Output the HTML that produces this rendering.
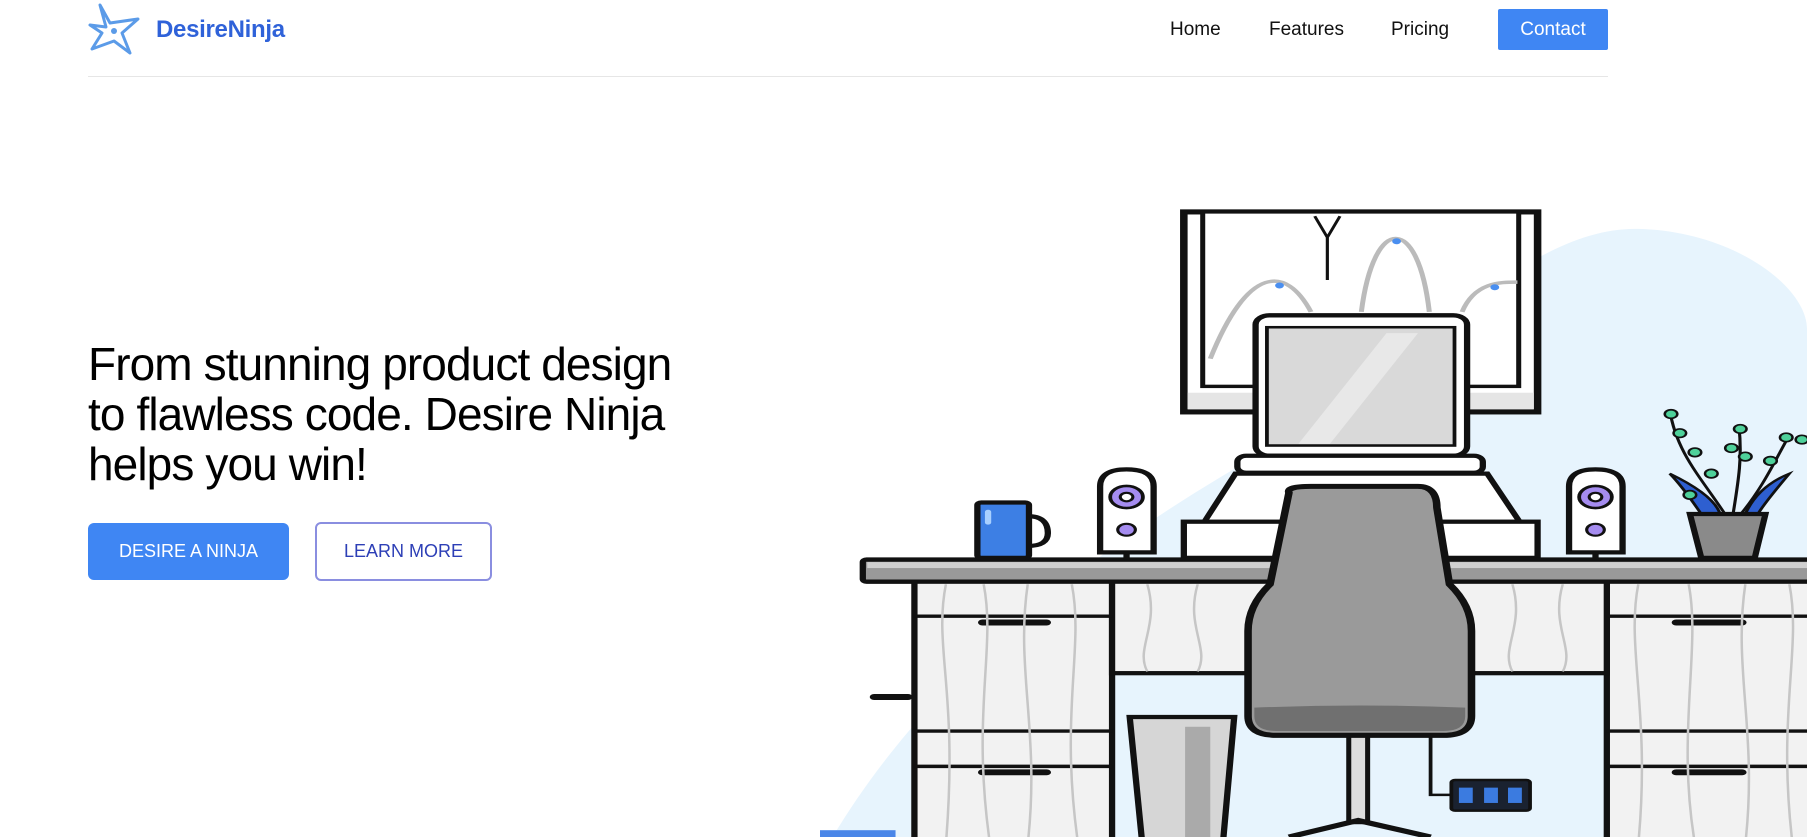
<!DOCTYPE html>
<html><head><meta charset="utf-8"><style>
*{margin:0;padding:0;box-sizing:border-box}
body{width:1807px;height:837px;overflow:hidden;background:#fff;font-family:"Liberation Sans",sans-serif;position:relative}
.logo{position:absolute;left:88px;top:3px}
.brand{position:absolute;left:156px;top:16px;font-size:24px;font-weight:bold;color:#2f62d9;letter-spacing:-0.3px}
.nav a{position:absolute;top:19px;font-size:19px;color:#111;text-decoration:none}
.contact{position:absolute;left:1498px;top:9px;width:110px;height:41px;background:#3f86f3;color:#fff;border-radius:2px;font-size:19px;text-align:center;line-height:41px}
.hr{position:absolute;left:88px;top:76px;width:1520px;height:1px;background:#e6e6e6}
h1{position:absolute;left:88px;top:339px;font-size:46px;font-weight:normal;line-height:50px;color:#000;letter-spacing:-0.9px;width:780px}
.b1{position:absolute;left:88px;top:523px;width:201px;height:57px;background:#3f86f3;color:#fff;border-radius:6px;font-size:18px;text-align:center;line-height:57px}
.b2{position:absolute;left:315px;top:522px;width:177px;height:59px;border:2px solid #8a8ee0;color:#2d3fb6;border-radius:6px;font-size:18px;text-align:center;line-height:55px}
svg.ill{position:absolute;left:820px;top:180px}
</style></head><body>
<svg class="logo" width="54" height="52" viewBox="0 0 54 52"><path d="M12 2 L22 20 L50 16 L34 30 L42 50 L26 38 L4 46 L14 30 L2 22 L18 24 Z" fill="none" stroke="#5b9be8" stroke-width="3" stroke-linejoin="round"/><circle cx="26" cy="28" r="3" fill="#5b9be8"/></svg>
<div class="brand">DesireNinja</div>
<div class="nav"><a style="left:1170px">Home</a><a style="left:1269px">Features</a><a style="left:1391px">Pricing</a></div>
<div class="contact">Contact</div>
<div class="hr"></div>
<h1>From stunning product design<br>to flawless code. Desire Ninja<br>helps you win!</h1>
<div class="b1">DESIRE A NINJA</div>
<div class="b2">LEARN MORE</div>
<svg class="ill" width="987" height="657" viewBox="0 0 1568 1544" preserveAspectRatio="none">
<path d="M20,1544 C200,1100 500,800 800,560 C1000,330 1150,110 1300,115 C1450,120 1568,250 1568,350 L1568,1544 Z" fill="#e7f4fd"/>
<rect x="578" y="75" width="562" height="470" fill="#fff" stroke="#111" stroke-width="12"/>
<rect x="608" y="75" width="502" height="410" fill="#fff" stroke="#111" stroke-width="8"/>
<rect x="584" y="500" width="550" height="38" fill="#e5e5e5"/>
<path d="M620,420 C680,200 740,200 780,310 M860,310 C880,80 950,80 968,310 M1020,310 C1040,240 1080,240 1108,240" stroke="#bbb" stroke-width="8" fill="none"/>
<path d="M786,85 L806,135 L826,85 M806,135 V235" stroke="#111" stroke-width="5" fill="none"/>
<circle cx="730" cy="248" r="7" fill="#4a8ff0"/><circle cx="916" cy="144" r="7" fill="#4a8ff0"/><circle cx="1072" cy="252" r="7" fill="#4a8ff0"/>
<path d="M612,800 L660,690 L1060,690 L1110,800" fill="#fff" stroke="#111" stroke-width="10"/>
<rect x="578" y="803" width="562" height="85" fill="#fff" stroke="#111" stroke-width="10"/>
<rect x="692" y="318" width="336" height="330" rx="22" fill="#fff" stroke="#111" stroke-width="10"/>
<rect x="710" y="346" width="298" height="278" fill="#d9d9d9" stroke="#111" stroke-width="6"/>
<path d="M760,620 L900,360 L950,360 L810,620 Z" fill="#e8e8e8"/>
<rect x="663" y="648" width="390" height="40" rx="14" fill="#fff" stroke="#111" stroke-width="10"/>
<rect x="68" y="892" width="1510" height="52" rx="6" fill="#999" stroke="#111" stroke-width="10"/>
<rect x="75" y="898" width="1500" height="14" fill="#d0d0d0"/>
<rect x="150" y="944" width="314" height="620" fill="#f2f2f2" stroke="#111" stroke-width="10"/>
<rect x="1250" y="944" width="330" height="620" fill="#f2f2f2" stroke="#111" stroke-width="10"/>
<rect x="464" y="944" width="786" height="215" fill="#f2f2f2" stroke="#111" stroke-width="10"/>
<path d="M150,1025 H464 M150,1295 H464 M150,1378 H464 M1250,1025 H1580 M1250,1295 H1580 M1250,1378 H1580" stroke="#111" stroke-width="8"/>
<path d="M258,1040 H360 M258,1392 H360 M1360,1040 H1465 M1360,1392 H1465 M86,1215 H140" stroke="#111" stroke-width="14" stroke-linecap="round"/>
<path d="M200,950 C180,1100 220,1200 200,1560 M260,950 C280,1100 240,1250 270,1560 M330,950 C310,1150 350,1300 330,1560 M400,950 C420,1100 380,1250 410,1560 M1300,950 C1280,1100 1320,1250 1300,1560 M1380,950 C1400,1100 1360,1300 1390,1560 M1470,950 C1450,1150 1490,1300 1470,1560 M1540,950 C1560,1100 1520,1250 1545,1560 M520,950 C540,1050 500,1100 520,1155 M600,950 C580,1050 620,1100 600,1155 M1100,950 C1120,1050 1080,1100 1100,1155 M1180,950 C1160,1050 1200,1100 1180,1155" stroke="#c6c6c6" stroke-width="4" fill="none"/>
<path d="M492,1262 H658 L640,1560 H512 Z" fill="#d6d6d6" stroke="#111" stroke-width="10"/>
<rect x="580" y="1285" width="40" height="270" fill="#aaa"/>
<rect x="840" y="1300" width="30" height="210" fill="#ddd" stroke="#111" stroke-width="8"/>
<path d="M745,1544 L855,1505 L970,1544" stroke="#111" stroke-width="12" fill="none"/>
<path d="M745,735 Q740,720 780,720 H950 Q980,720 980,770 L1000,950 Q1035,1000 1035,1060 V1260 Q1035,1305 990,1305 H725 Q680,1305 680,1260 V1060 Q680,1000 715,950 Z" fill="#9a9a9a" stroke="#111" stroke-width="12"/>
<path d="M690,1240 Q860,1230 1025,1240 V1260 Q1025,1295 990,1295 H725 Q690,1295 690,1260 Z" fill="#707070"/>
<path d="M970,1310 V1445 H1005" stroke="#111" stroke-width="6" fill="none"/>
<rect x="1003" y="1410" width="125" height="72" rx="6" fill="#1a2230" stroke="#111" stroke-width="6"/>
<rect x="1015" y="1428" width="22" height="36" fill="#3b7be0"/><rect x="1055" y="1428" width="22" height="36" fill="#3b7be0"/><rect x="1093" y="1428" width="22" height="36" fill="#3b7be0"/>
<path d="M330,790 Q362,790 362,830 Q362,860 330,860" stroke="#111" stroke-width="10" fill="none"/>
<rect x="250" y="758" width="82" height="130" rx="6" fill="#3d7fe4" stroke="#111" stroke-width="10"/>
<rect x="262" y="775" width="10" height="35" rx="5" fill="#a8d0ff"/>
<g id="sp"><path d="M445,875 V720 Q445,680 487,680 Q530,680 530,720 V875 Z" fill="#fff" stroke="#111" stroke-width="10"/><circle cx="487" cy="745" r="26" fill="#a58cf0" stroke="#111" stroke-width="6"/><circle cx="487" cy="745" r="10" fill="#fff" stroke="#111" stroke-width="5"/><circle cx="487" cy="822" r="14" fill="#a58cf0" stroke="#111" stroke-width="5"/><rect x="482" y="875" width="10" height="18" fill="#111"/></g>
<use href="#sp" x="745"/>
<path d="M1440,790 C1400,700 1360,640 1350,540 M1450,790 C1460,700 1465,650 1460,580 M1460,790 C1500,720 1520,650 1540,600" stroke="#111" stroke-width="5" fill="none"/>
<path d="M1400,785 Q1370,720 1350,690 Q1420,740 1430,785 Z M1470,785 Q1490,720 1540,690 Q1500,760 1490,785 Z" fill="#2e5fd0" stroke="#111" stroke-width="5"/>
<g fill="#4ed19a" stroke="#111" stroke-width="4"><circle cx="1352" cy="550" r="10"/><circle cx="1366" cy="595" r="10"/><circle cx="1390" cy="640" r="10"/><circle cx="1416" cy="690" r="10"/><circle cx="1382" cy="740" r="10"/><circle cx="1462" cy="585" r="10"/><circle cx="1448" cy="630" r="10"/><circle cx="1470" cy="650" r="10"/><circle cx="1535" cy="605" r="10"/><circle cx="1510" cy="660" r="10"/><circle cx="1560" cy="610" r="10"/></g>
<path d="M1382,785 H1502 L1485,888 H1400 Z" fill="#8a8a8a" stroke="#111" stroke-width="10"/>
<rect x="0" y="1528" width="120" height="16" fill="#4a86e8"/>
</svg>
</body></html>
